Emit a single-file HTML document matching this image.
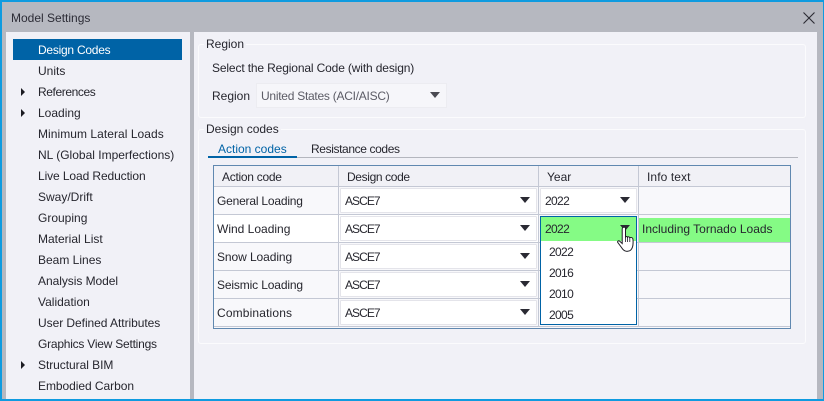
<!DOCTYPE html>
<html><head><meta charset="utf-8"><style>
html,body{margin:0;padding:0;width:824px;height:401px;overflow:hidden;background:#b6b8c0}
*{box-sizing:border-box}
body{font-family:"Liberation Sans",sans-serif;font-size:12px;color:#26262e;position:relative}
.a{position:absolute}
.t{position:absolute;white-space:nowrap;line-height:16px;height:16px}
.arr{position:absolute;width:0;height:0;border-left:5.5px solid transparent;border-right:5.5px solid transparent;border-top:6px solid #2a2a33}
.tri{position:absolute;left:21px;width:0;height:0;border-top:4px solid transparent;border-bottom:4px solid transparent;border-left:4px solid #1c1c22}
.c{position:absolute;background:#fff;border:1px solid #e4e4ea;border-radius:1px}
.l{position:absolute;background:#c4c8d4}
.n{letter-spacing:-.65px}
.s{letter-spacing:-.95px}
</style></head><body>
<div class="a" style="left:0;top:0;width:824px;height:401px;border:solid #0f9be0;border-width:2px 1px 2px 2px;z-index:9;pointer-events:none"></div>
<div class="t" style="left:11px;top:10px;color:#2c2c36">Model Settings</div>
<svg class="a" style="left:802px;top:11px" width="14" height="14"><path d="M1.5 1.5L12.5 12.5M12.5 1.5L1.5 12.5" stroke="#2a2a33" stroke-width="1.1" fill="none"/></svg>

<div class="a" style="left:6px;top:32px;width:184px;height:367px;background:#f1f1f7"></div>
<div class="a" style="left:194px;top:32px;width:623px;height:367px;background:#f1f1f7"></div>

<div class="a" style="left:13px;top:39px;width:169px;height:21px;background:#0063a6"></div>
<div class="t" style="left:38px;top:42px;color:#fff;letter-spacing:-.25px">Design Codes</div>
<div class="t" style="left:38px;top:63px">Units</div>
<div class="tri" style="top:88px"></div><div class="t" style="left:38px;top:84px;letter-spacing:-.4px">References</div>
<div class="tri" style="top:109px"></div><div class="t" style="left:38px;top:105px">Loading</div>
<div class="t" style="left:38px;top:126px;letter-spacing:.05px">Minimum Lateral Loads</div>
<div class="t" style="left:38px;top:147px">NL (Global Imperfections)</div>
<div class="t" style="left:38px;top:168px;letter-spacing:-.1px">Live Load Reduction</div>
<div class="t" style="left:38px;top:189px">Sway/Drift</div>
<div class="t" style="left:38px;top:210px">Grouping</div>
<div class="t" style="left:38px;top:231px">Material List</div>
<div class="t" style="left:38px;top:252px">Beam Lines</div>
<div class="t" style="left:38px;top:273px;letter-spacing:-.05px">Analysis Model</div>
<div class="t" style="left:38px;top:294px">Validation</div>
<div class="t" style="left:38px;top:315px;letter-spacing:-.05px">User Defined Attributes</div>
<div class="t" style="left:38px;top:336px;letter-spacing:-.23px">Graphics View Settings</div>
<div class="tri" style="top:361px"></div><div class="t" style="left:38px;top:357px;letter-spacing:-.05px">Structural BIM</div>
<div class="t" style="left:38px;top:378px;letter-spacing:-.05px">Embodied Carbon</div>

<div class="a" style="left:198px;top:44px;width:608px;height:74px;border:1px solid #fbfbfd;border-radius:3px"></div>
<div class="a" style="left:198px;top:129px;width:608px;height:215px;border:1px solid #fbfbfd;border-radius:3px"></div>
<div class="t" style="left:204px;top:36px;background:#f1f1f7;padding:0 2px">Region</div>
<div class="t" style="left:212px;top:60px;letter-spacing:-.14px">Select the Regional Code (with design)</div>
<div class="t" style="left:212px;top:88px">Region</div>
<div class="a" style="left:256px;top:83px;width:191px;height:25px;background:#f6f6fa;border:1px solid #ececf1"></div>
<div class="t" style="left:261px;top:88px;color:#5c5c66;letter-spacing:-.26px">United States (ACI/AISC)</div>
<div class="arr" style="left:430px;top:92px;border-top-color:#4a4a52"></div>

<div class="t" style="left:204px;top:121px;background:#f1f1f7;padding:0 2px">Design codes</div>
<div class="t" style="left:218px;top:141px;color:#0063a6">Action codes</div>
<div class="t" style="left:311px;top:141px;letter-spacing:-.38px">Resistance codes</div>
<div class="a" style="left:208px;top:157px;width:590px;height:1px;background:#b4b6be"></div>
<div class="a" style="left:208px;top:156px;width:89px;height:2px;background:#0063a6"></div>

<div class="a" style="left:213px;top:165px;width:578px;height:164px;border:1px solid #6088b0;background:#f8f8fb"></div>
<div class="a" style="left:214px;top:166px;width:576px;height:20px;background:#f1f1f6"></div>
<div class="a" style="left:214px;top:215px;width:324px;height:27px;background:#fff"></div>
<div class="l" style="left:214px;top:186px;width:576px;height:1px"></div>
<div class="l" style="left:214px;top:214px;width:576px;height:1px"></div>
<div class="l" style="left:214px;top:242px;width:576px;height:1px"></div>
<div class="l" style="left:214px;top:270px;width:576px;height:1px"></div>
<div class="l" style="left:214px;top:298px;width:576px;height:1px"></div>
<div class="l" style="left:214px;top:326px;width:576px;height:1px"></div>
<div class="l" style="left:338px;top:166px;width:1px;height:160px"></div>
<div class="l" style="left:538px;top:166px;width:1px;height:160px"></div>
<div class="l" style="left:638px;top:166px;width:1px;height:160px"></div>

<div class="t" style="left:222px;top:169px;letter-spacing:-.28px">Action code</div>
<div class="t" style="left:347px;top:169px;letter-spacing:-.36px">Design code</div>
<div class="t" style="left:547px;top:169px">Year</div>
<div class="t" style="left:647px;top:169px;letter-spacing:.1px">Info text</div>

<div class="t" style="left:217px;top:193px;letter-spacing:-.2px">General Loading</div>
<div class="t" style="left:217px;top:221px">Wind Loading</div>
<div class="t" style="left:217px;top:249px;letter-spacing:-.08px">Snow Loading</div>
<div class="t" style="left:217px;top:277px;letter-spacing:-.14px">Seismic Loading</div>
<div class="t" style="left:217px;top:305px;letter-spacing:.15px">Combinations</div>

<div class="c" style="left:340px;top:188px;width:197px;height:25px"></div><div class="t s" style="left:345px;top:193px">ASCE7</div><div class="arr" style="left:520px;top:197px"></div>
<div class="c" style="left:340px;top:216px;width:197px;height:25px"></div><div class="t s" style="left:345px;top:221px">ASCE7</div><div class="arr" style="left:520px;top:225px"></div>
<div class="c" style="left:340px;top:244px;width:197px;height:25px"></div><div class="t s" style="left:345px;top:249px">ASCE7</div><div class="arr" style="left:520px;top:253px"></div>
<div class="c" style="left:340px;top:272px;width:197px;height:25px"></div><div class="t s" style="left:345px;top:277px">ASCE7</div><div class="arr" style="left:520px;top:281px"></div>
<div class="c" style="left:340px;top:300px;width:197px;height:25px"></div><div class="t s" style="left:345px;top:305px">ASCE7</div><div class="arr" style="left:520px;top:309px"></div>

<div class="c" style="left:540px;top:188px;width:97px;height:25px"></div><div class="t n" style="left:545px;top:193px">2022</div><div class="arr" style="left:620px;top:197px"></div>

<div class="a" style="left:639px;top:218px;width:151px;height:24px;background:#85fb85"></div>
<div class="t" style="left:642px;top:221px">Including Tornado Loads</div>
<div class="a" style="left:540px;top:216px;width:97px;height:109px;background:#fff;border:1px solid #0063a6"></div>
<div class="a" style="left:541px;top:217px;width:95px;height:24px;background:#85fb85"></div>
<div class="t n" style="left:545px;top:221px">2022</div>
<div class="arr" style="left:620px;top:225px"></div>
<div class="t n" style="left:549px;top:244px">2022</div>
<div class="t n" style="left:549px;top:265px">2016</div>
<div class="t n" style="left:549px;top:286px">2010</div>
<div class="t n" style="left:549px;top:307px">2005</div>

<svg class="a" style="left:616px;top:226px" width="21" height="27" viewBox="0 0 21 27"><path d="M7 1.5C8 .8 9 1 9.5 2V11C10.1 10.3 11.1 10.3 11.5 11.2C12.1 10.5 13.3 10.7 13.7 11.7C14.6 11.2 16.5 11.5 16.8 12.6C17.3 14.5 17.2 19 16.5 21C15.6 24 13.8 25.2 11.5 25.3C9 25.5 7 24 5.5 21.5L1.8 16.5C1.1 15.4 2.3 14.3 3.5 15L6.2 17.5V3C6.2 2.3 6.5 1.8 7 1.5Z" fill="#fff" stroke="#1c1c22" stroke-width="1"/><path d="M9.5 11V16M11.6 11V16M13.8 11.7V16" stroke="#1c1c22" stroke-width=".8" fill="none"/></svg>
</body></html>
